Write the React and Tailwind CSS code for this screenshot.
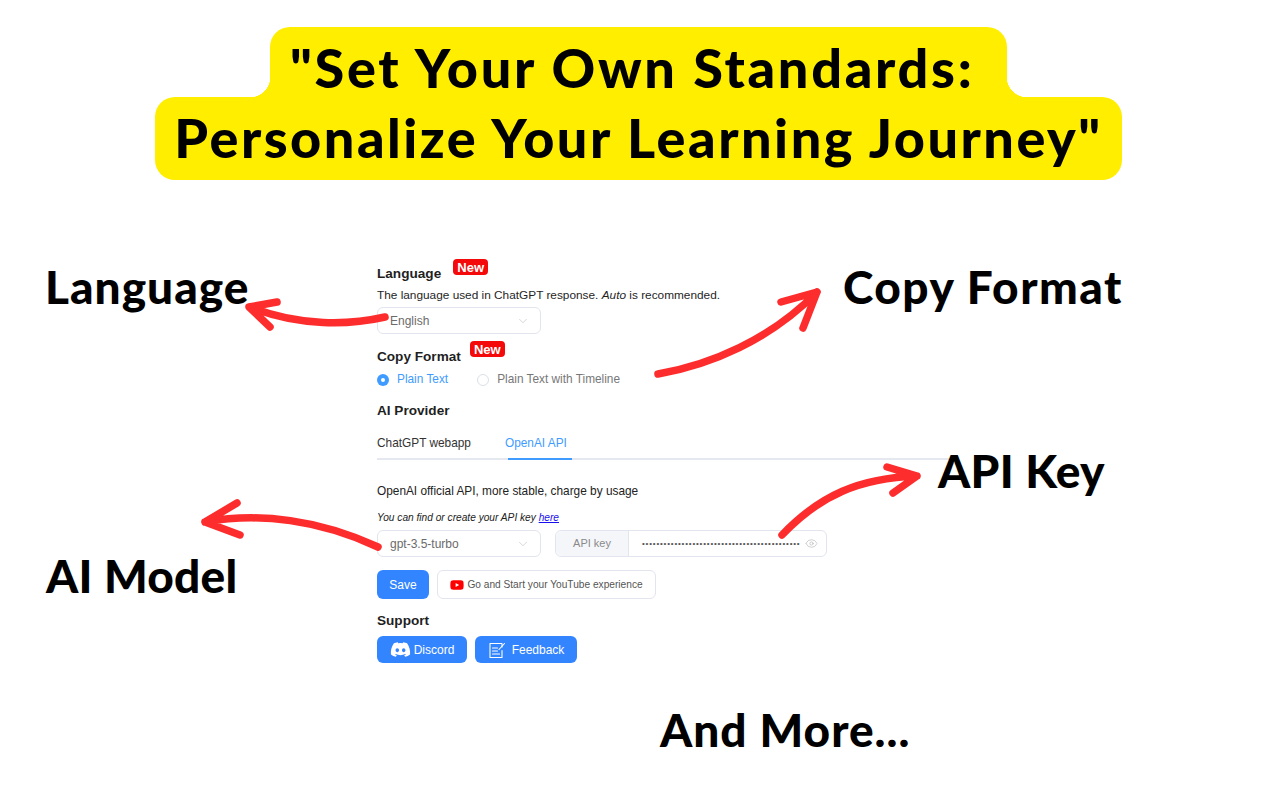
import React from "react";
import { ChevronDown, Eye } from "lucide-react";
import { FaDiscord, FaYoutube } from "react-icons/fa";

const head = "font-['Lato','Noto_Sans',sans-serif] font-black text-black";

function Badge() {
  return (
    <span className="flex h-[16px] w-[35px] items-center justify-center rounded-[4px] bg-[#f40a0a] text-[13px] font-bold leading-none text-white">
      New
    </span>
  );
}

function Select({ value }) {
  return (
    <div className="flex h-[27px] w-[164px] items-center justify-between rounded-[6px] border border-[#e2e5ee] bg-white pl-[12px] pr-[10px] text-[12px] text-[#6b6b6b]">
      <span>{value}</span>
      <ChevronDown size={14} strokeWidth={1.1} className="text-[#bfc1c8]" />
    </div>
  );
}

function Arrows() {
  const p = "M385 317 C350 325 300 327 250 307 M277 302 L249 307 L270 327 M658 374 C710 365 770 340 817 292 M781 302 L817 292 L803 328 M782 535 C820 495 860 478 917 476 M887 467 L917 476 L893 493 M378 547 C320 520 260 512 205 522 M237 503 L205 522 L240 535";
  return (
    <svg className="pointer-events-none absolute left-0 top-0 h-[800px] w-[1280px]" viewBox="0 0 1280 800" fill="none">
      <path d={p} stroke="#fe2d2d" strokeWidth="7.5" strokeLinecap="round" strokeLinejoin="round" />
    </svg>
  );
}

function Title() {
  return (
    <header className={`${head} flex flex-col items-center pr-[3px] pt-[27px] text-[54px]`}>
      <div className="relative flex h-[70px] w-[737px] justify-start rounded-t-[20px] bg-[#ffee00] pl-[20px] pt-[14px] tracking-[2.7px]">
        <span className="leading-none">"Set Your Own Standards:</span>
        <span className="absolute left-[-20px] top-[50px] h-[20px] w-[20px] bg-[radial-gradient(circle_at_0_0,transparent_20px,#ffee00_20.5px)]" />
        <span className="absolute right-[-20px] top-[50px] h-[20px] w-[20px] bg-[radial-gradient(circle_at_100%_0,transparent_20px,#ffee00_20.5px)]" />
      </div>
      <div className="flex h-[83px] w-[967px] items-start justify-center rounded-[20px] bg-[#ffee00] pt-[14px] tracking-[2.5px]">
        <span className="leading-none">Personalize Your Learning Journey"</span>
      </div>
    </header>
  );
}

function Panel() {
  return (
    <section className="ml-[377px] mt-[79px] flex w-[573px] flex-col font-['Liberation_Sans',Arial,sans-serif] text-[#1f1f1f]">
      <div className="flex h-[16px] items-start">
        <h3 className="mt-[7px] text-[13.6px] font-bold leading-[16px]">Language</h3>
        <span className="ml-[12px]"><Badge /></span>
      </div>
      <p className="mt-[12px] text-[11.83px] leading-[16px]">
        The language used in ChatGPT response. <i>Auto</i> is recommended.
      </p>
      <div className="mt-[4px]"><Select value="English" /></div>
      <div className="mt-[7px] flex h-[16px] items-start">
        <h3 className="mt-[8px] text-[13.6px] font-bold leading-[16px]">Copy Format</h3>
        <span className="ml-[9px]"><Badge /></span>
      </div>
      <div className="mt-[15px] flex h-[16px] items-center text-[11.85px]">
        <span className="flex h-[12px] w-[12px] items-center justify-center rounded-full bg-[#3f9bff]">
          <span className="h-[4px] w-[4px] rounded-full bg-white" />
        </span>
        <span className="ml-[8px] text-[#3f9bff]">Plain Text</span>
        <span className="ml-[29px] h-[12px] w-[12px] rounded-full border border-[#dcdfe6]" />
        <span className="ml-[8px] text-[#777]">Plain Text with Timeline</span>
      </div>
      <h3 className="mt-[15px] text-[13.6px] font-bold leading-[16px]">AI Provider</h3>
      <div className="mt-[12px] flex h-[29px] border-b-2 border-[#e6e8ef] text-[11.85px]">
        <span className="mt-[4px] leading-[16px] text-[#333]">ChatGPT webapp</span>
        <span className="ml-[34px] mt-[4px] leading-[16px] text-[#3f9bff]">OpenAI API</span>
      </div>
      <span className="relative mt-[-2px] ml-[131px] h-[2px] w-[64px] bg-[#3f9bff]" />
      <p className="mt-[23px] text-[11.85px] leading-[16px] text-[#222]">OpenAI official API, more stable, charge by usage</p>
      <p className="mt-[11px] text-[10.17px] italic leading-[16px] text-[#222]">
        You can find or create your API key <a className="text-[#1a0dee] underline" href="#">here</a>
      </p>
      <div className="mt-[4px] flex items-start">
        <Select value="gpt-3.5-turbo" />
        <div className="ml-[14px] flex h-[27px] w-[272px] rounded-[6px] border border-[#e2e5ee] text-[11px]">
          <span className="flex w-[73px] items-center justify-center rounded-l-[6px] border-r border-[#e2e5ee] bg-[#f5f6fa] text-[#8a8a8a]">API key</span>
          <span className="flex flex-1 items-center justify-between pl-[13px] pr-[8px]">
            <span className="text-[8px] tracking-[0.8px] text-[#555]">{"•".repeat(44)}</span>
            <Eye size={13} strokeWidth={1} className="text-[#aaa]" />
          </span>
        </div>
      </div>
      <div className="mt-[13px] flex gap-[8px]">
        <button className="h-[29px] w-[52px] rounded-[6px] bg-[#3385ff] text-[12px] text-white">Save</button>
        <button className="flex h-[29px] w-[219px] items-center justify-center gap-[3px] rounded-[6px] border border-[#e2e5ee] text-[10.17px] text-[#555]">
          <FaYoutube size={14} className="text-[#f00]" />
          Go and Start your YouTube experience
        </button>
      </div>
      <h3 className="mt-[14px] text-[13.6px] font-bold leading-[16px]">Support</h3>
      <div className="mt-[7px] flex gap-[8px] text-[12px] text-white">
        <button className="flex h-[27px] w-[90px] items-center justify-center gap-[3px] rounded-[6px] bg-[#3385ff]">
          <FaDiscord size={21} />Discord
        </button>
        <button className="flex h-[27px] w-[102px] items-center justify-center gap-[6px] rounded-[6px] bg-[#3385ff]">
          <svg width="18" height="18" viewBox="0 0 18 18" fill="none" stroke="currentColor" strokeWidth="1.1" strokeLinecap="round" strokeLinejoin="round">
            <path d="M14 6V2.5H2V16.5h12V9.5" />
            <path d="M4.5 7h5M4.5 10h5M4.5 13h7" />
            <path d="M11 8.5L16.5 2.5" />
          </svg>
          Feedback
        </button>
      </div>
    </section>
  );
}

export default function App() {
  const label = `${head} absolute leading-none text-[46px]`;
  return (
    <main className="relative h-[800px] w-[1280px] overflow-hidden bg-white">
      <Title />
      <Panel />
      <span className={`${label} left-[45px] top-[264px] tracking-[1px]`}>Language</span>
      <span className={`${label} left-[843px] top-[264px] tracking-[1.5px]`}>Copy Format</span>
      <span className={`${label} left-[938px] top-[448px] tracking-[0.3px]`}>API Key</span>
      <span className={`${label} left-[46px] top-[553px] tracking-[0.25px]`}>AI Model</span>
      <span className={`${label} left-[660px] top-[707px] tracking-[1px]`}>And More...</span>
      <Arrows />
    </main>
  );
}
